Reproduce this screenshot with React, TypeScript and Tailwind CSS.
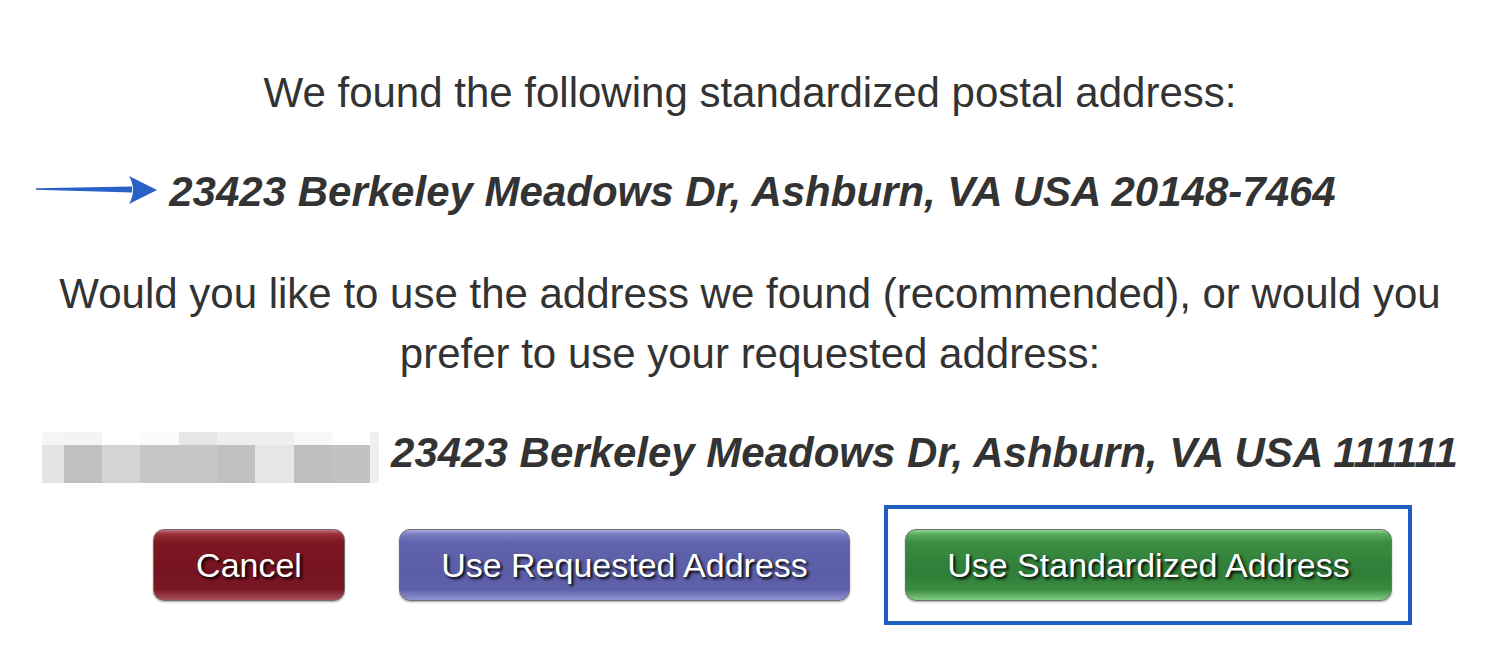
import React from 'react';

const mosaicTop = ['#f5f5f5', '#f4f4f4', '#ffffff', '#fafafa', '#e6e6e6', '#efefef', '#efefef', '#f8f8f8', '#ffffff', '#f0f0f0'];
const mosaicBottom = ['#e4e4e4', '#c0c0c0', '#d4d4d4', '#c6c6c6', '#c6c6c6', '#c0c0c0', '#e6e6e6', '#bfbfbf', '#c2c2c2', '#efefef'];
const mosaicX = [0, 22, 60, 98, 137, 175, 213, 252, 290, 328, 337];

const BlurredName: React.FC = () => (
  <svg width="337" height="52" viewBox="0 0 337 52" className="shrink-0">
    {mosaicTop.map((c, i) => (
      <rect key={'t' + i} x={mosaicX[i]} y={0} width={mosaicX[i + 1] - mosaicX[i]} height={13} fill={c} />
    ))}
    {mosaicBottom.map((c, i) => (
      <rect key={'b' + i} x={mosaicX[i]} y={13} width={mosaicX[i + 1] - mosaicX[i]} height={38} fill={c} />
    ))}
  </svg>
);

const BlueArrow: React.FC = () => (
  <svg
    width="122"
    height="30"
    viewBox="0 0 122 30"
    className="absolute left-[-133px] top-[4px]"
  >
    <path d="M0 13.2 L96 11.5 L96 17.5 L0 14.8 Z" fill="#2862c8" />
    <path d="M93 1 Q107 8 121 15 Q107 22 93 29 Q101 15 93 1 Z" fill="#2862c8" />
  </svg>
);

type ButtonProps = { label: string; className: string };

const GlossButton: React.FC<ButtonProps> = ({ label, className }) => (
  <button
    className={`h-[72px] rounded-[11px] border border-[#6f6f6f] text-white text-[34px] leading-none shadow-[0_1px_2px_rgba(0,0,0,0.35)] [text-shadow:2px_2px_3px_#000] ${className}`}
  >
    {label}
  </button>
);

export default function App() {
  return (
    <div className="w-[1500px] h-[672px] bg-white flex flex-col items-center text-[#333333] font-['Liberation_Sans',Arial,sans-serif] overflow-hidden">
      <p className="pt-[72px] text-[42px] leading-[42px]">
        We found the following standardized postal address:
      </p>

      <div className="relative mt-[57px] ml-[5px]">
        <BlueArrow />
        <p className="text-[42px] leading-[42px] font-bold italic">
          23423 Berkeley Meadows Dr, Ashburn, VA USA 20148-7464
        </p>
      </div>

      <p className="mt-[51px] text-[42px] leading-[60px] text-center">
        Would you like to use the address we found (recommended), or would you
        <br />
        prefer to use your requested address:
      </p>

      <div className="mt-[48px] flex items-start gap-[12px] h-[42px]">
        <BlurredName />
        <p className="text-[42px] leading-[42px] font-bold italic whitespace-nowrap">
          23423 Berkeley Meadows Dr, Ashburn, VA USA 111111
        </p>
      </div>

      <div className="mt-[31px] self-stretch flex items-center pl-[153px]">
        <GlossButton
          label="Cancel"
          className="w-[192px] bg-[linear-gradient(to_bottom,#c27079_0%,#9a2f3a_6%,#7d1722_18%,#761320_60%,#7a1824_85%,#a8505a_100%)]"
        />
        <GlossButton
          label="Use Requested Address"
          className="ml-[54px] w-[451px] bg-[linear-gradient(to_bottom,#a9acdf_0%,#7a7dc2_6%,#6063ac_18%,#5b5ea7_60%,#5f62ab_85%,#8f92d2_100%)]"
        />
        <div className="ml-[34px] border-[4px] border-[#1f5fbf] pt-[20px] pb-[20px] pl-[17px] pr-[16px]">
          <GlossButton
            label="Use Standardized Address"
            className="w-[487px] bg-[linear-gradient(to_bottom,#8fd890_0%,#58ac5c_6%,#3b8c42_18%,#2f7d37_60%,#3a8a41_85%,#7fce82_100%)]"
          />
        </div>
      </div>
    </div>
  );
}
